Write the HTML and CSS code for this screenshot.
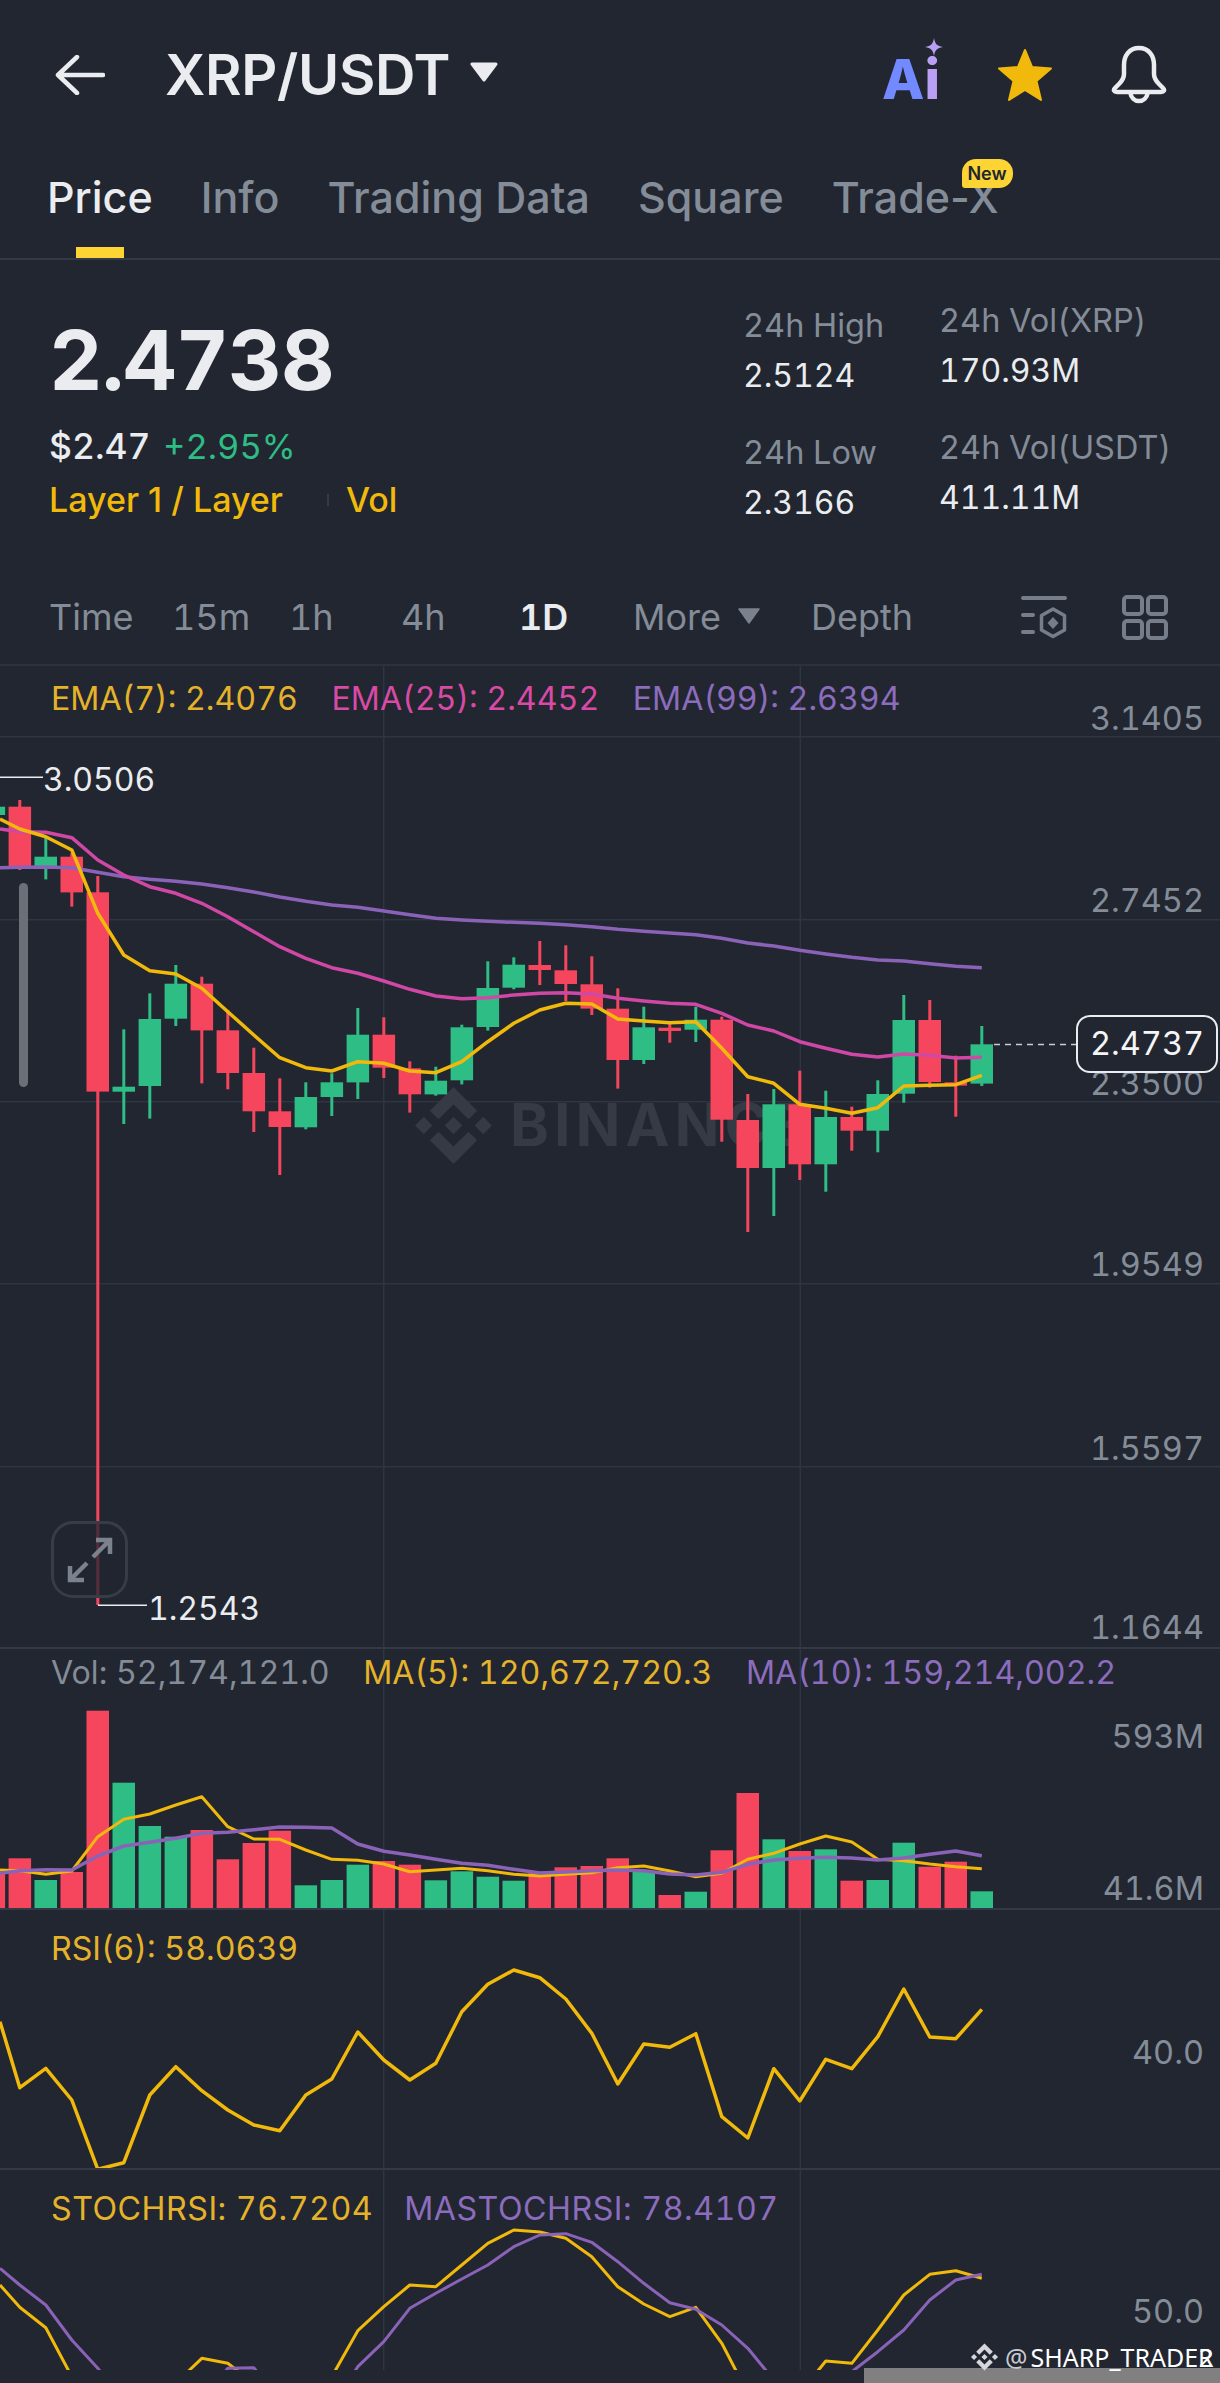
FILE: index.html
```html
<!DOCTYPE html>
<html lang="en">
<head>
  <meta charset="UTF-8" />
  <meta name="viewport" content="width=device-width, initial-scale=1" />
  <title>XRP/USDT</title>
  <link rel="stylesheet" href="styles.css">
</head>
<body>
  <svg class="defs" width="0" height="0">
    <symbol id="bnb" viewBox="0 0 126.61 126.61">
      <path d="m38.73 53.2 24.59-24.58 24.6 24.6 14.3-14.31L63.32 0 24.43 38.9z"/>
      <path d="m0 63.31 14.3-14.31 14.31 14.31-14.31 14.3z"/>
      <path d="m38.73 73.41 24.59 24.59 24.6-24.6 14.31 14.29-38.9 38.91-38.91-38.88v-.03z"/>
      <path d="m98 63.31 14.3-14.31 14.31 14.3-14.31 14.32z"/>
      <path d="m77.83 63.3-14.51-14.52-10.73 10.73-1.24 1.23-2.54 2.54v.03l14.51 14.5 14.51-14.52z"/>
    </symbol>
  </svg>

  <div class="app">
    <header class="header">
      <svg class="back" width="50" height="40" viewBox="0 0 50 40">
        <path d="M3 20H48M22 2 3 20l19 18" fill="none" stroke="#eaecef" stroke-width="4.5" stroke-linecap="round" stroke-linejoin="round"/>
      </svg>
      <h1 class="pair">XRP/USDT</h1>
      <svg class="pair-caret" width="30" height="20" viewBox="0 0 30 20">
        <path d="M3 2H27L15 18Z" fill="#eaecef" stroke="#eaecef" stroke-width="3" stroke-linejoin="round"/>
      </svg>
      <div class="ai">
        <span class="ai-a">A</span><span class="ai-i">i</span>
        <svg class="ai-spark" width="18" height="18" viewBox="0 0 18 18">
          <path d="M9 0C10 6 12 8 18 9 12 10 10 12 9 18 8 12 6 10 0 9 6 8 8 6 9 0Z" fill="#b79ff2"/>
        </svg>
      </div>
      <svg class="star" width="56" height="54" viewBox="0 0 56 54">
        <path d="M28 2 35 19 54 20.500 39.500 33 44 52 28 42 12 52 16.500 33 2 20.500 21 19Z" fill="#f0b90b" stroke="#f0b90b" stroke-width="2" stroke-linejoin="round"/>
      </svg>
      <svg class="bell" width="56" height="60" viewBox="0 0 56 60">
        <path d="M28 3C18 3 13 11 13 20V29C13 33 11 36 8 39L4 43C2 45 3 47 6 47H50C53 47 54 45 52 43L48 39C45 36 43 33 43 29V20C43 11 38 3 28 3Z M19 47C20 53 24 56 28 56 32 56 36 53 37 47" fill="none" stroke="#eaecef" stroke-width="4.500" stroke-linejoin="round"/>
      </svg>
    </header>

    <nav class="tabs">
      <a class="tab active">Price</a>
      <a class="tab">Info</a>
      <a class="tab">Trading Data</a>
      <a class="tab">Square</a>
      <a class="tab">Trade-X<span class="badge">New</span></a>
    </nav>

    <section class="summary">
      <div class="quote">
        <div class="last">2.4738</div>
        <div class="fiat">$2.47 <span class="change">+2.95%</span></div>
        <div class="tags"><span>Layer 1 / Layer</span><i class="tag-sep"></i><span>Vol</span></div>
      </div>
      <div class="stats stats-low">
        <div class="stat"><div class="stat-label">24h High</div><div class="stat-value">2.5124</div></div>
        <div class="stat"><div class="stat-label">24h Low</div><div class="stat-value">2.3166</div></div>
      </div>
      <div class="stats">
        <div class="stat"><div class="stat-label">24h Vol(XRP)</div><div class="stat-value">170.93M</div></div>
        <div class="stat"><div class="stat-label">24h Vol(USDT)</div><div class="stat-value">411.11M</div></div>
      </div>
    </section>

    <div class="toolbar">
      <span>Time</span>
      <span>15m</span>
      <span>1h</span>
      <span>4h</span>
      <span class="active">1D</span>
      <span class="more">More
        <svg width="24" height="16" viewBox="0 0 24 16"><path d="M2 1H22L12 15Z" fill="#7b828e" stroke="#7b828e" stroke-width="1.500" stroke-linejoin="round"/></svg>
      </span>
      <span>Depth</span>
      <svg width="50" height="46" viewBox="0 0 50 46">
        <path d="M4 4H46M4 21H14M4 38H14" fill="none" stroke="#777e8b" stroke-width="4" stroke-linecap="round"/>
        <path d="M34 15 45.500 21.500V36L34 42.500 22.500 36V21.500Z" fill="none" stroke="#777e8b" stroke-width="3.500" stroke-linejoin="round"/>
        <path d="M34 23 39.500 29 34 35 28.500 29Z" fill="#777e8b"/>
      </svg>
      <svg width="46" height="46" viewBox="0 0 46 46">
        <g fill="none" stroke="#777e8b" stroke-width="4">
          <rect x="2" y="3" width="18" height="17" rx="3"/>
          <rect x="26" y="3" width="18" height="17" rx="3"/>
          <rect x="2" y="27" width="18" height="17" rx="3"/>
          <rect x="26" y="27" width="18" height="17" rx="3"/>
        </g>
      </svg>
    </div>

    <section class="pane pane-price">
      <svg class="plot" id="plot-price" width="1220" height="983"></svg>
      <div class="legend">
        <span class="yellow">EMA(7): 2.4076</span>
        <span class="pink">EMA(25): 2.4452</span>
        <span class="purple">EMA(99): 2.6394</span>
      </div>
      <span class="axis" style="top: 31px">3.1405</span>
      <span class="axis" style="top: 213px">2.7452</span>
      <span class="axis" style="top: 396px">2.3500</span>
      <span class="axis" style="top: 577px">1.9549</span>
      <span class="axis" style="top: 761px">1.5597</span>
      <span class="axis" style="top: 940px">1.1644</span>
      <span class="marker marker-high">3.0506</span>
      <span class="marker marker-low">1.2543</span>
      <div class="scrollbar"></div>
      <div class="expand">
        <svg width="46" height="46" viewBox="0 0 46 46">
          <path d="M26 20 42 4M29 3H43V17M20 26 4 42M3 29V43H17" fill="none" stroke="#7b828e" stroke-width="4.500"/>
        </svg>
      </div>
      <div class="now">2.4737</div>
    </section>

    <section class="pane pane-vol">
      <svg class="plot" id="plot-vol" width="1220" height="261"></svg>
      <div class="legend">
        <span class="grey">Vol: 52,174,121.0</span>
        <span class="yellow">MA(5): 120,672,720.3</span>
        <span class="purple">MA(10): 159,214,002.2</span>
      </div>
      <span class="axis" style="top: 66px">593M</span>
      <span class="axis" style="top: 218px">41.6M</span>
    </section>

    <section class="pane pane-rsi">
      <svg class="plot" id="plot-rsi" width="1220" height="260"></svg>
      <div class="legend">
        <span class="yellow">RSI(6): 58.0639</span>
      </div>
      <span class="axis" style="top: 121px">40.0</span>
    </section>

    <section class="pane pane-stoch">
      <svg class="plot" id="plot-stoch" width="1220" height="200"></svg>
      <div class="legend">
        <span class="yellow">STOCHRSI: 76.7204</span>
        <span class="purple">MASTOCHRSI: 78.4107</span>
      </div>
      <span class="axis" style="top: 120px">50.0</span>
    </section>

    <div class="bottom-bar"></div>
    <div class="credit">
      <svg width="27" height="30"><use href="#bnb"/></svg>
      <span class="credit-at">@</span><span>SHARP_TRADER</span><span class="credit-over">2</span>
    </div>
  </div>

  <script src="chart.js"></script>
</body>
</html>
```

FILE: styles.css
```css
* {
  box-sizing: border-box;
}
body {
  margin: 0;
  background: #212630;
  color: #eaecef;
  font-family: Inter, "Liberation Sans", sans-serif;
  font-variant-numeric: tabular-nums;
}
.defs {
  position: absolute;
}
.app {
  position: relative;
  width: 1220px;
  height: 2383px;
  overflow: hidden;
}

/* Header */
.header {
  display: flex;
  align-items: center;
  height: 150px;
  padding-left: 55px;
}
.pair {
  margin: 0 0 0 60px;
  font-size: 56px;
  font-weight: 600;
  letter-spacing: -0.3px;
  white-space: nowrap;
}
.pair-caret {
  margin: 0 0 6px 19px;
}
.ai {
  position: relative;
  margin: 8px 0 0 383px;
  width: 60px;
  font-size: 55px;
  font-weight: 800;
  line-height: 50px;
}
.ai-a {
  color: #7389ff;
}
.ai-i {
  color: #b9a0f5;
}
.ai-spark {
  position: absolute;
  top: -16px;
  left: 43px;
}
.star {
  margin: 0 0 0 55px;
}
.bell {
  margin: 0 0 0 58px;
}

/* Tabs */
.tabs {
  display: flex;
  gap: 48px;
  height: 110px;
  padding: 19px 0 0 47px;
  border-bottom: 2px solid #333a46;
  font-variant-numeric: normal;
}
.tab {
  position: relative;
  height: 56px;
  color: #848c98;
  font-size: 43px;
  font-weight: 500;
  line-height: 56px;
  white-space: nowrap;
}
.tab.active {
  color: #eaecef;
}
.tab.active::after {
  content: "";
  position: absolute;
  left: 29px;
  top: 78px;
  width: 48px;
  height: 11px;
  background: #fcd535;
}
.badge {
  position: absolute;
  right: -14px;
  top: -10px;
  width: 51px;
  height: 29px;
  border-radius: 14px 14px 14px 3px;
  background: #fcd535;
  color: #202630;
  font-size: 18px;
  font-weight: 600;
  line-height: 29px;
  text-align: center;
}

/* Price summary */
.summary {
  display: flex;
  height: 300px;
}
.quote {
  width: 743px;
  padding: 52px 0 0 49px;
}
.last {
  height: 96px;
  font-size: 83px;
  font-weight: 700;
  line-height: 96px;
  letter-spacing: -1px;
}
.fiat {
  margin-top: 16px;
  font-size: 35.500px;
  font-weight: 500;
  line-height: 46px;
}
.change {
  margin-left: 3px;
  color: #2ebd85;
  font-size: 34.500px;
  font-weight: 400;
}
.tags {
  display: flex;
  align-items: center;
  margin-top: 8px;
  color: #f0b90b;
  font-size: 34px;
  font-variant-numeric: normal;
  font-weight: 500;
  line-height: 44px;
}
.tag-sep {
  width: 2px;
  height: 12px;
  margin: 0 17px 0 44px;
  background: #333a46;
}
.stats {
  padding-top: 36px;
}
.stats-low {
  width: 196px;
  padding-top: 41px;
}
.stat {
  height: 127px;
}
.stat-label {
  color: #848c98;
  font-size: 32.500px;
  line-height: 50px;
  white-space: nowrap;
}
.stat-value {
  font-size: 32px;
  line-height: 50px;
}

/* Interval toolbar */
.toolbar {
  display: grid;
  grid-template-columns: 123px 117px 112px 118px 114px 178px 208px 103px auto;
  align-items: center;
  height: 106px;
  padding: 9px 0 0 49px;
  border-bottom: 2px solid #2c323d;
  color: #848c98;
  font-size: 36px;
}
.toolbar .active {
  color: #eaecef;
  font-weight: 600;
}
.more svg {
  margin: 0 0 6px 6px;
}

/* Chart panes */
.pane {
  position: relative;
  overflow: hidden;
}
.pane-price {
  height: 983px;
  border-bottom: 2px solid #333a46;
}
.pane-vol {
  height: 261px;
  border-bottom: 2px solid #333a46;
}
.pane-rsi {
  height: 260px;
  border-bottom: 2px solid #333a46;
}
.pane-stoch {
  height: 200px;
}
.plot {
  position: absolute;
  left: 0;
  top: 0;
}
.legend {
  position: relative;
  display: flex;
  gap: 33.500px;
  padding: 0 0 0 51px;
  font-size: 32.200px;
  line-height: 44px;
  white-space: nowrap;
}
.pane-price .legend {
  padding-top: 11px;
}
.pane-vol .legend {
  padding-top: 2px;
}
.pane-rsi .legend {
  padding-top: 17px;
}
.pane-stoch .legend {
  padding-top: 17px;
  letter-spacing: 0.5px;
  gap: 31px;
}
.yellow {
  color: #e5b32b;
}
.pink {
  color: #d84aa5;
}
.purple {
  color: #8c6cbd;
}
.grey {
  color: #848c98;
}
.axis {
  position: absolute;
  right: 16px;
  color: #848c98;
  font-size: 32.500px;
  line-height: 44px;
}
.marker {
  position: absolute;
  color: #eaecef;
  font-size: 32px;
  line-height: 44px;
}
.marker-high {
  left: 43px;
  top: 92px;
}
.marker-low {
  left: 148px;
  top: 921px;
}
.scrollbar {
  position: absolute;
  left: 19px;
  top: 217px;
  width: 9px;
  height: 204px;
  border-radius: 5px;
  background: #6b6f78;
}
.expand {
  position: absolute;
  left: 51px;
  top: 855px;
  display: flex;
  align-items: center;
  justify-content: center;
  width: 77px;
  height: 77px;
  border: 3px solid #363c48;
  border-radius: 22px;
  background: rgba(33, 38, 48, 0.75);
}
.now {
  position: absolute;
  left: 1076px;
  top: 349px;
  width: 142px;
  height: 58px;
  border: 2px solid #eaecef;
  border-radius: 14px;
  background: #212630;
  color: #f5f5f5;
  font-size: 32.500px;
  line-height: 54px;
  text-align: center;
}

/* Bottom overlay */
.bottom-bar {
  position: absolute;
  right: 0;
  bottom: 0;
  width: 356px;
  height: 15px;
  background: #808080;
}
.credit {
  position: absolute;
  left: 971px;
  top: 2342px;
  display: flex;
  align-items: center;
  height: 30px;
  color: #fff;
  font-family: "Noto Sans", sans-serif;
  font-size: 25px;
  white-space: nowrap;
}
.credit svg {
  fill: #d5d7db;
}
.credit-at {
  margin: 0 3px 0 7px;
  color: #c8cbd0;
}
.credit-over {
  margin-left: -15px;
}
```

FILE: chart.js
```js
// Candle slots are 26px apart. All values are read off the screenshot at 3x vertical scale.
const slotX = i => 19.8 + 26 * i;
const BAR = 22.5;
const UP = '#2ebd85';
const DOWN = '#f6465d';
const GOLD = '#f0b90b';
const PINK = '#d048a5';
const VIOLET = '#8a63b8';
const GRID = '#2f3541';

// [up, wick top, body top, body bottom, wick bottom]
const candles = [
  [1, 255, 260, 285, 290],
  [0, 240, 260, 440, 450],
  [1, 350, 410, 440, 478],
  [0, 400, 410, 517, 560],
  [0, 468, 517, 1115, 2655],
  [1, 928, 1100, 1115, 1212],
  [1, 820, 897, 1098, 1196],
  [1, 735, 791, 896, 918],
  [0, 770, 791, 931, 1090],
  [0, 870, 931, 1059, 1108],
  [0, 983, 1059, 1174, 1236],
  [0, 1075, 1174, 1221, 1365],
  [1, 1087, 1131, 1222, 1228],
  [1, 1060, 1087, 1131, 1188],
  [1, 864, 944, 1087, 1137],
  [0, 892, 944, 1043, 1074],
  [0, 1024, 1045, 1123, 1178],
  [1, 1040, 1082, 1123, 1127],
  [1, 914, 922, 1081, 1093],
  [1, 724, 804, 921, 932],
  [1, 712, 734, 803, 808],
  [0, 663, 735, 750, 795],
  [0, 676, 751, 792, 843],
  [0, 709, 793, 866, 885],
  [0, 805, 866, 1020, 1106],
  [1, 860, 922, 1020, 1032],
  [0, 908, 923, 933, 968],
  [1, 860, 899, 929, 966],
  [0, 890, 899, 1199, 1265],
  [0, 1122, 1200, 1344, 1536],
  [1, 1107, 1153, 1344, 1488],
  [0, 1052, 1153, 1333, 1380],
  [1, 1112, 1191, 1333, 1415],
  [0, 1160, 1191, 1232, 1292],
  [1, 1081, 1122, 1232, 1297],
  [1, 825, 900, 1121, 1148],
  [0, 840, 900, 1086, 1103],
  [0, 1007, 1087, 1097, 1190],
  [1, 918, 973, 1091, 1098]
];

// first value sits at x=0, the rest on slots 0..37
const ema7 = [297, 327, 350, 390, 580, 705, 752, 762, 805, 875, 945, 1013, 1043, 1053, 1025, 1030, 1053, 1058, 1025, 965, 910, 870, 850, 852, 897, 903, 908, 905, 985, 1070, 1090, 1153, 1165, 1180, 1163, 1098, 1096, 1094, 1066];
const ema25 = [327, 335, 337, 353, 420, 465, 500, 520, 550, 590, 635, 680, 715, 743, 760, 783, 808, 828, 836, 833, 825, 820, 818, 822, 835, 843, 850, 853, 880, 915, 933, 965, 985, 1003, 1011, 1002, 1006, 1014, 1012];
const ema99 = [443, 442, 441, 443, 457, 470, 478, 484, 492, 503, 516, 531, 544, 555, 562, 573, 584, 595, 600, 604, 607, 610, 614, 620, 628, 634, 639, 644, 655, 669, 678, 691, 702, 712, 720, 723, 731, 739, 743];

const volumes = [
  [0, 700], [0, 655], [1, 720], [0, 696], [0, 212], [1, 428], [1, 558], [1, 590], [0, 570], [0, 658],
  [0, 609], [0, 572], [1, 736], [1, 720], [1, 674], [0, 663], [0, 674], [1, 721], [1, 694], [1, 710],
  [1, 722], [0, 695], [0, 682], [0, 678], [0, 655], [1, 693], [0, 765], [1, 755], [0, 631], [0, 459],
  [1, 598], [0, 633], [1, 628], [0, 722], [1, 720], [1, 608], [0, 680], [0, 665], [1, 754]
];
const ma5 = [690, 692, 703, 693, 590, 538, 522, 495, 470, 560, 597, 598, 630, 658, 661, 672, 695, 690, 685, 692, 703, 708, 703, 698, 683, 678, 693, 710, 700, 658, 640, 612, 588, 606, 658, 662, 672, 680, 686];
const ma10 = [700, 692, 689, 690, 648, 618, 607, 595, 580, 577, 569, 561, 562, 564, 612, 634, 645, 658, 670, 676, 688, 699, 696, 692, 690, 692, 702, 705, 697, 673, 660, 655, 652, 654, 660, 654, 643, 633, 647];

const rsi = [365, 563, 505, 600, 808, 788, 585, 500, 572, 630, 675, 692, 585, 537, 396, 480, 540, 490, 335, 253, 210, 233, 297, 400, 552, 432, 442, 401, 650, 714, 506, 603, 478, 506, 410, 267, 411, 416, 328];
const stoch = [1155, 1222, 1283, 1430, 1560, 1700, 1600, 1450, 1375, 1390, 1450, 1600, 1600, 1430, 1292, 1220, 1155, 1160, 1095, 1030, 990, 996, 1015, 1070, 1160, 1212, 1250, 1222, 1330, 1480, 1600, 1480, 1383, 1390, 1290, 1185, 1123, 1112, 1135];
const mastoch = [1105, 1155, 1215, 1320, 1405, 1500, 1600, 1600, 1500, 1405, 1403, 1500, 1600, 1520, 1400, 1325, 1225, 1180, 1137, 1095, 1040, 1005, 1001, 1027, 1085, 1150, 1208, 1228, 1275, 1345, 1440, 1600, 1600, 1415, 1355, 1290, 1200, 1140, 1123];

function rect(x, y, w, h, fill) {
  return `<rect x="${x.toFixed(1)}" y="${y.toFixed(1)}" width="${w}" height="${h.toFixed(1)}" fill="${fill}"/>`;
}

function line(values, toY, color, width) {
  // slots start at -1 so the first point lands on x=0
  const pts = values.map((v, i) => `${(i === 0 ? 0 : slotX(i - 1)).toFixed(1)},${toY(v).toFixed(1)}`);
  return `<polyline points="${pts.join(' ')}" fill="none" stroke="${color}" stroke-width="${width}" stroke-linejoin="round"/>`;
}

function verticalGrid(h) {
  return rect(383, 0, 1.5, h, GRID) + rect(799.5, 0, 1.5, h, GRID);
}

// Price pane
const priceY = z => 54 + z / 3;
let price = verticalGrid(983);
[70, 253, 435, 617, 800].forEach(y => { price += rect(0, y, 1220, 1.5, GRID); });
price += '<use href="#bnb" x="415" y="421" width="77" height="77" fill="#353a44"/>';
price += '<text x="510" y="480" font-size="59" font-weight="700" letter-spacing="5" fill="#353a44">BINANCE</text>';
candles.forEach((c, n) => {
  const x = slotX(n - 1);
  const color = c[0] ? UP : DOWN;
  price += rect(x - 1.5, priceY(c[1]), 3, (c[4] - c[1]) / 3, color);
  price += rect(x - BAR / 2, priceY(c[2]), BAR, (c[3] - c[2]) / 3, color);
});
price += line(ema99, priceY, VIOLET, 3.5);
price += line(ema25, priceY, PINK, 3.5);
price += line(ema7, priceY, GOLD, 3.5);
price += rect(0, 110.5, 43, 1.5, '#eaecef');
price += rect(98, 938.5, 49, 1.5, '#eaecef');
price += '<line x1="994" y1="378.500" x2="1076" y2="378.500" stroke="#c9ccd1" stroke-width="1.500" stroke-dasharray="6 5"/>';
document.getElementById('plot-price').innerHTML = price;

// Volume pane
const volY = z => z / 3 - 9;
let vol = verticalGrid(261);
volumes.forEach((v, n) => {
  const top = volY(v[1]);
  vol += rect(slotX(n - 1) - BAR / 2, top, BAR, 259 - top, v[0] ? UP : DOWN);
});
vol += line(ma5, volY, GOLD, 3);
vol += line(ma10, volY, VIOLET, 3.5);
document.getElementById('plot-vol').innerHTML = vol;

// RSI pane
const rsiY = z => z / 3 - 10;
document.getElementById('plot-rsi').innerHTML = verticalGrid(260) + line(rsi, rsiY, GOLD, 3.5);

// Stoch RSI pane
const stochY = z => z / 3 - 270;
document.getElementById('plot-stoch').innerHTML =
  verticalGrid(200) + line(stoch, stochY, GOLD, 3) + line(mastoch, stochY, VIOLET, 3);
```
